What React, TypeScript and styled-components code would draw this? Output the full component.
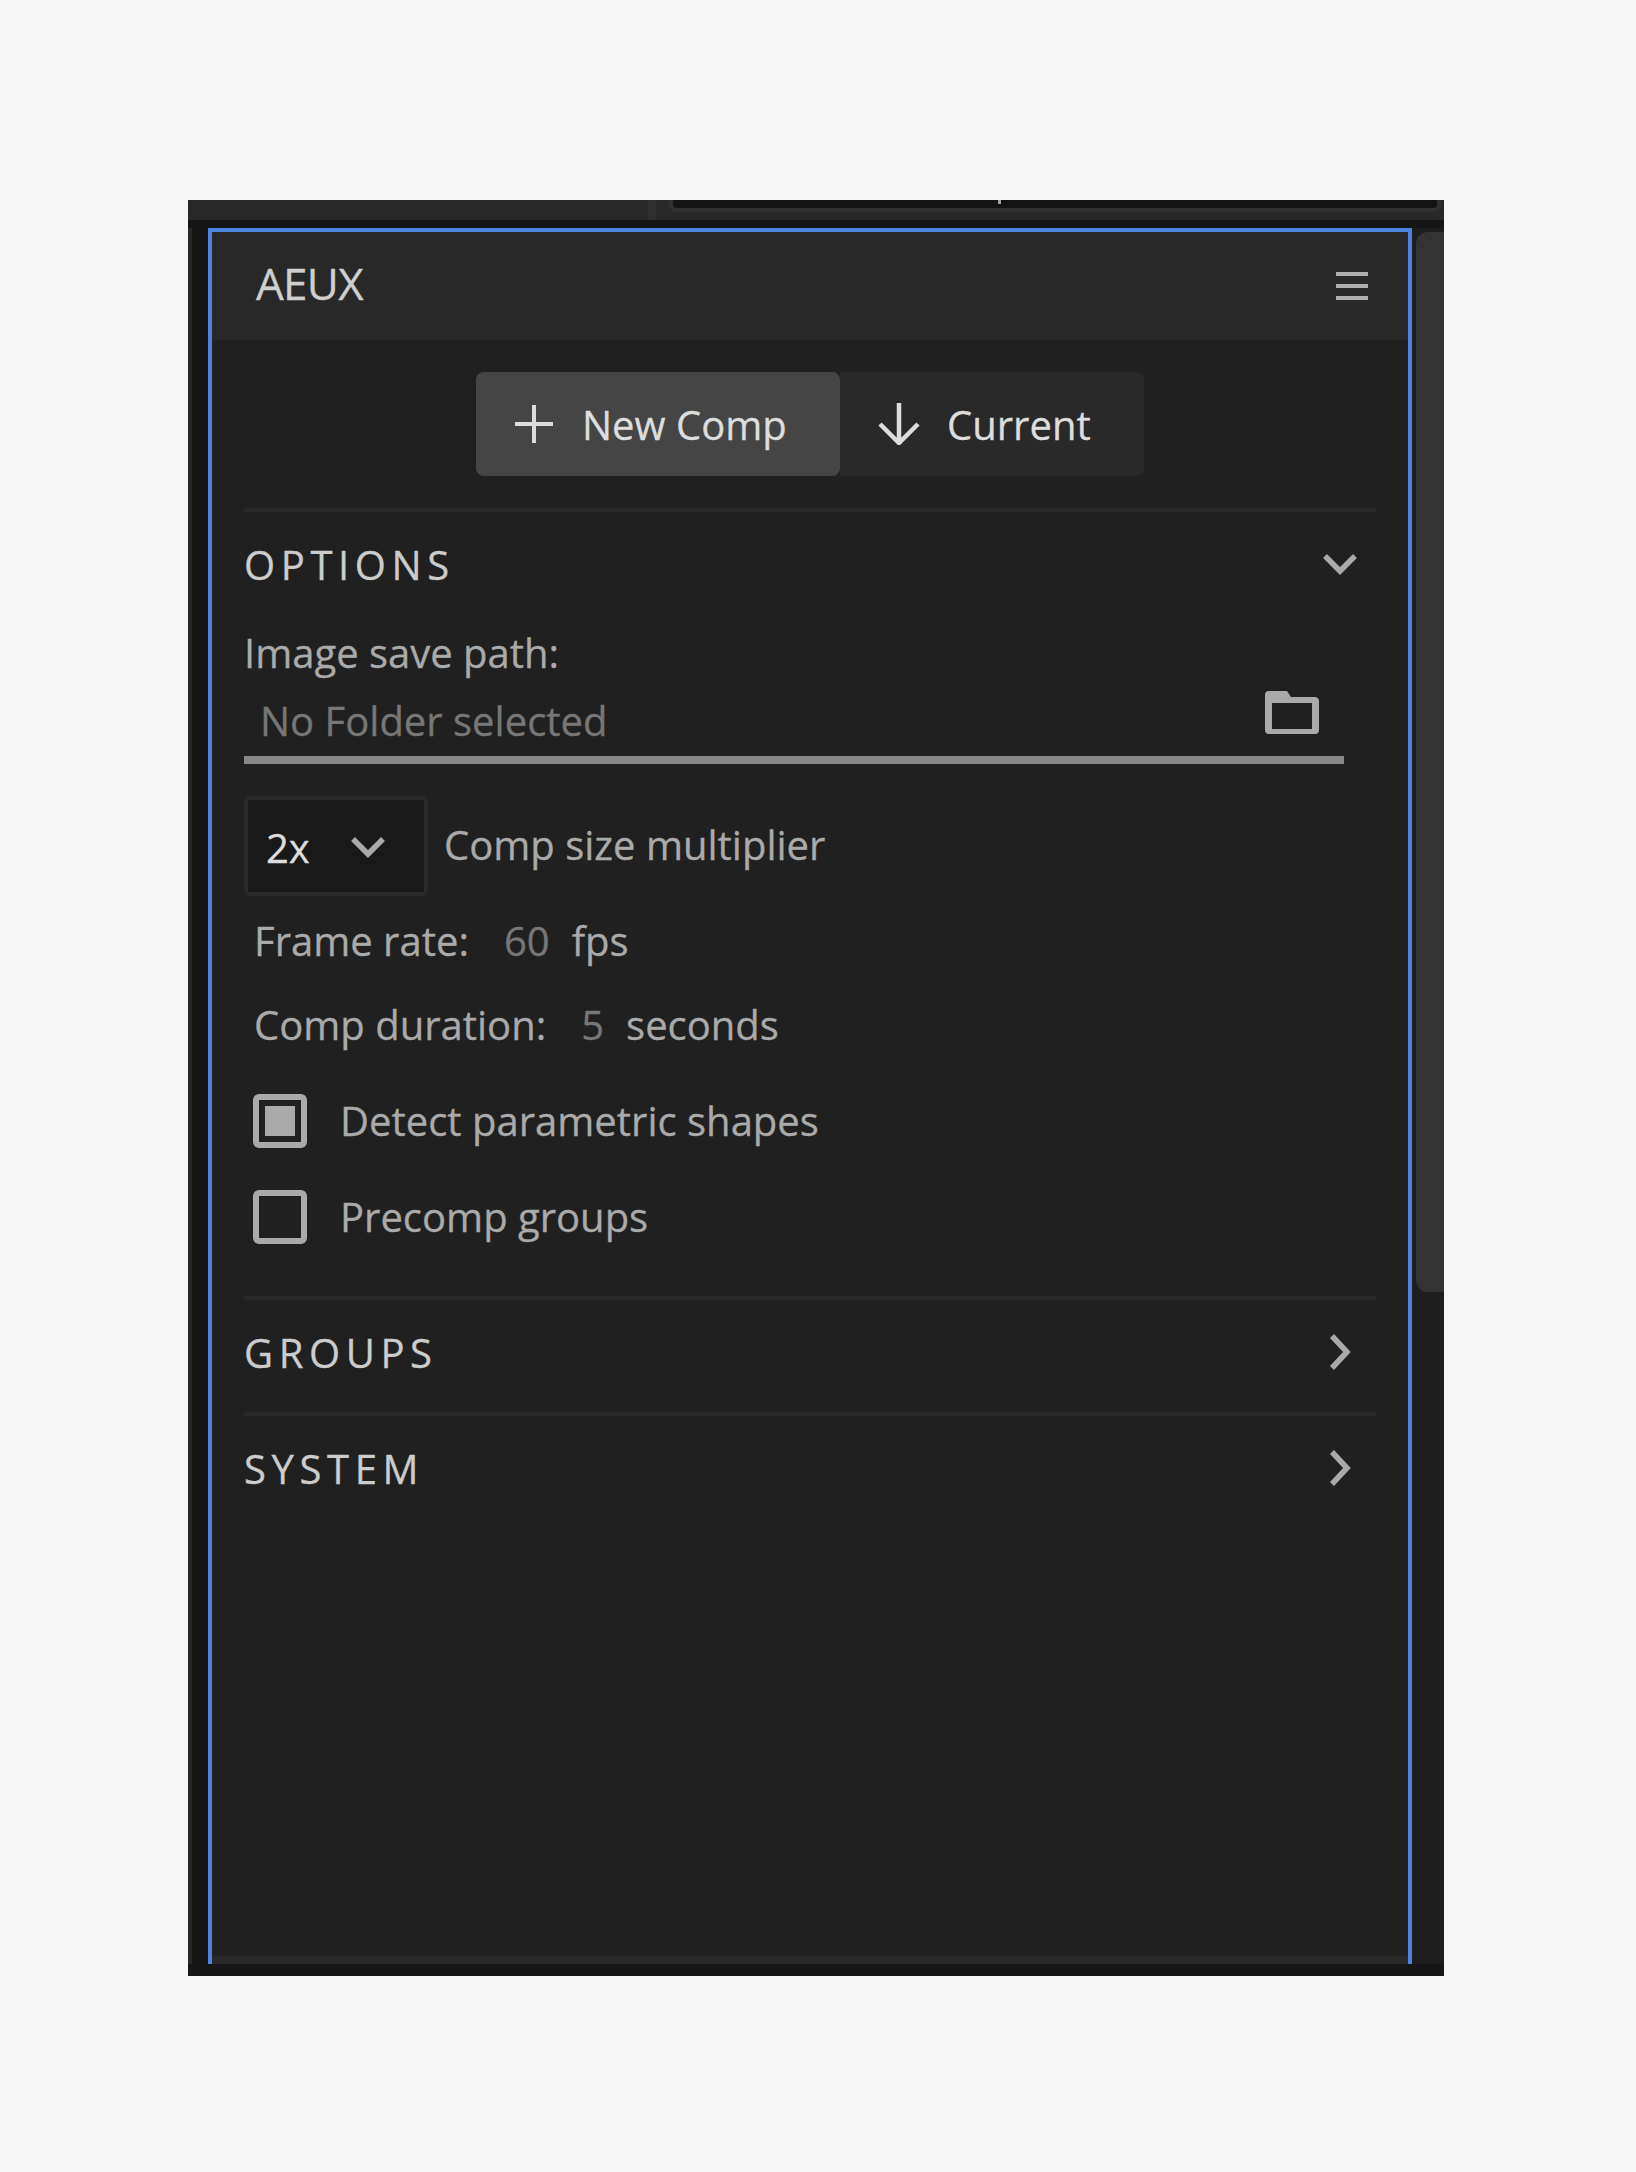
import React from "react";
import styled, { createGlobalStyle } from "styled-components";

const GlobalStyle = createGlobalStyle`
  html, body { margin: 0; padding: 0; background: #f6f6f6; }
  * { box-sizing: border-box; }
  body {
    font-family: "Open Sans", "Noto Sans", sans-serif;
    -webkit-text-stroke: 0.3px currentColor;
  }
`;

const Page = styled.div`
  width: 1636px;
  height: 2172px;
  padding: 200px 192px 196px 188px;
  background: #f6f6f6;
`;

const Frame = styled.div`
  width: 1256px;
  height: 1776px;
  background: #161616;
  display: flex;
  flex-direction: column;
`;

const TopStrip = styled.div`
  height: 20px;
  flex: none;
  background: #282828;
  display: flex;
  align-items: flex-start;
  padding-left: 460px;
  padding-right: 3px;
  margin-bottom: 8px;
`;

const StripDivider = styled.div`
  width: 8px;
  height: 20px;
  background: #2e2e2e;
  margin-right: 13px;
`;

const StripBox = styled.div`
  position: relative;
  flex: 1;
  height: 12px;
  background: #131313;
  border: 4px solid #303030;
  border-top: none;
  border-radius: 0 0 8px 8px;
`;

const Descender = styled.span`
  position: absolute;
  left: 325px;
  top: 0;
  width: 3px;
  height: 4px;
  background: #a0a0a0;
`;

const Body = styled.div`
  flex: 1;
  display: flex;
  min-height: 0;
  border-left: 4px solid #282828;
  padding-left: 16px;
`;

const Panel = styled.div`
  width: 1204px;
  flex: none;
  background: #202020;
  border: 4px solid #4a86e0;
  border-bottom: none;
  display: flex;
  flex-direction: column;
`;

const Header = styled.header`
  height: 108px;
  flex: none;
  background: #282828;
  display: flex;
  align-items: center;
  justify-content: space-between;
  padding: 0 40px 0 44px;
`;

const Title = styled.h1`
  margin: -6px 0 0;
  font-size: 44px;
  line-height: 60px;
  font-weight: 400;
  color: #cfcfcf;
  letter-spacing: -0.7px;
`;

const Main = styled.div`
  flex: 1;
  min-height: 0;
  padding: 32px 32px 0;
  display: flex;
  flex-direction: column;
`;

const ButtonRow = styled.div`
  display: flex;
  justify-content: center;
  margin-bottom: 32px;
`;

const ActionButton = styled.button<{ $primary?: boolean; $w: number; $pl: number }>`
  width: ${(p) => p.$w}px;
  height: 104px;
  border: none;
  padding: 0 0 0 ${(p) => p.$pl}px;
  display: flex;
  align-items: center;
  gap: ${(p) => (p.$primary ? 29 : 27)}px;
  background: ${(p) => (p.$primary ? "#454545" : "#292929")};
  border-radius: ${(p) => (p.$primary ? "8px" : "0 8px 8px 0")};
  color: #dddddd;
  font-family: inherit;
  font-size: 40px;
  line-height: 54px;
  font-weight: 400;
`;

const ButtonLabel = styled.span`
  display: block;
  padding-top: 2px;
`;

const Section = styled.section`
  border-top: 4px solid #292929;
  padding-bottom: 8px;
  flex: none;
`;

const SectionHead = styled.div<{ $pr: number }>`
  height: 104px;
  display: flex;
  align-items: center;
  justify-content: space-between;
  padding-right: ${(p) => p.$pr}px;
`;

const SectionTitle = styled.h2`
  margin: 2px 0 0;
  font-size: 40px;
  line-height: 54px;
  font-weight: 400;
  letter-spacing: 5.6px;
  color: #cccccc;
`;

const OptionsBody = styled.div`
  padding-top: 10px;
  padding-bottom: 44px;
`;

const FieldLabel = styled.div`
  font-size: 40px;
  line-height: 54px;
  color: #aaaaaa;
`;

const PathField = styled.div`
  width: 1100px;
  margin-top: 12px;
  height: 72px;
  padding: 2px 25px 0 16px;
  border-bottom: 8px solid #888888;
  display: flex;
  justify-content: space-between;
  align-items: flex-start;
`;

const PathText = styled.span`
  font-size: 40px;
  line-height: 54px;
  color: #777777;
`;

const FolderIcon = styled.svg`
  margin-top: -3px;
  width: 54px;
  height: 43px;
  flex: none;
`;

const MultiplierRow = styled.div`
  display: flex;
  align-items: center;
  gap: 16px;
  margin-top: 32px;
  margin-bottom: 18px;
`;

const Select = styled.div`
  width: 184px;
  height: 100px;
  background: #191919;
  border: 4px solid #292929;
  border-radius: 6px;
  display: flex;
  align-items: center;
  justify-content: space-between;
  padding: 0 38px 0 18px;
  font-size: 40px;
  line-height: 54px;
  color: #dddddd;
  & > svg {
    margin-top: 2px;
  }
`;

const SelectValue = styled.span`
  display: block;
  padding-top: 4px;
`;

const PlainLabel = styled.span`
  font-size: 40px;
  line-height: 54px;
  color: #aaaaaa;
`;

const MultiplierLabel = styled(PlainLabel)`
  margin-top: -2px;
`;

const SettingRow = styled.div`
  height: 54px;
  display: flex;
  align-items: center;
  padding-left: 10px;
  margin-bottom: 30px;
`;

const SettingValue = styled.span<{ $ml: number }>`
  margin-left: ${(p) => p.$ml}px;
  font-size: 40px;
  line-height: 54px;
  color: #777777;
`;

const SettingUnit = styled.span<{ $ml: number }>`
  margin-left: ${(p) => p.$ml}px;
  font-size: 40px;
  line-height: 54px;
  color: #aaaaaa;
`;

const CheckRow = styled.label`
  height: 54px;
  display: flex;
  align-items: center;
  gap: 33px;
  padding-left: 9px;
  margin-top: 42px;
  font-size: 40px;
  line-height: 54px;
  color: #aaaaaa;
`;

const CheckBox = styled.span<{ $checked?: boolean }>`
  width: 54px;
  height: 54px;
  flex: none;
  border: 6px solid #aaaaaa;
  border-radius: 6px;
  padding: 6px;
  display: block;
  &::after {
    content: "";
    display: ${(p) => (p.$checked ? "block" : "none")};
    width: 100%;
    height: 100%;
    background: #aaaaaa;
  }
`;

const Spacer = styled.div`
  flex: 1;
`;

const PanelFoot = styled.div`
  height: 8px;
  flex: none;
  background: #292929;
  margin: 0 -32px;
`;

const Gutter = styled.div`
  flex: 1;
  background: #1e1e1e;
  padding: 4px 0 0 4px;
`;

const Thumb = styled.div`
  height: 1060px;
  background: #333333;
  border-radius: 12px 0 0 12px;
`;

const BottomBar = styled.div`
  height: 12px;
  flex: none;
  background: #161616;
`;

const Glyph = styled.svg`
  display: block;
  flex: none;
  fill: none;
  stroke-linecap: butt;
  stroke-linejoin: miter;
`;

const Hamburger = () => (
  <Glyph width="32" height="28" viewBox="0 0 32 28">
    <rect x="0" y="0" width="32" height="4" fill="#b0b0b0" />
    <rect x="0" y="12" width="32" height="4" fill="#b0b0b0" />
    <rect x="0" y="24" width="32" height="4" fill="#b0b0b0" />
  </Glyph>
);

const Chevron = ({ dir, color = "#aaaaaa" }: { dir: "down" | "right"; color?: string }) =>
  dir === "down" ? (
    <Glyph width="36" height="24" viewBox="0 0 36 24" stroke={color} strokeWidth="5.5">
      <path d="M3 4 L18 19 L33 4" />
    </Glyph>
  ) : (
    <Glyph width="24" height="38" viewBox="0 0 24 38" stroke={color} strokeWidth="5.5">
      <path d="M4 3 L19 19 L4 35" />
    </Glyph>
  );

const Plus = () => (
  <Glyph width="38" height="38" viewBox="0 0 38 38" stroke="#dddddd" strokeWidth="4">
    <path d="M19 0 V38 M0 19 H38" />
  </Glyph>
);

const ArrowDown = () => (
  <Glyph width="42" height="42" viewBox="0 0 42 42" stroke="#dddddd" strokeWidth="4.5">
    <path d="M21 0 V40 M2 21 L21 40 L40 21" />
  </Glyph>
);

export default function App() {
  return (
    <Page>
      <GlobalStyle />
      <Frame>
        <TopStrip>
          <StripDivider />
          <StripBox>
            <Descender />
          </StripBox>
        </TopStrip>
        <Body>
          <Panel>
            <Header>
              <Title>AEUX</Title>
              <Hamburger />
            </Header>
            <Main>
              <ButtonRow>
                <ActionButton $primary $w={364} $pl={39}>
                  <Plus />
                  <ButtonLabel>New Comp</ButtonLabel>
                </ActionButton>
                <ActionButton $w={304} $pl={38}>
                  <ArrowDown />
                  <ButtonLabel>Current</ButtonLabel>
                </ActionButton>
              </ButtonRow>
              <Section>
                <SectionHead $pr={18}>
                  <SectionTitle>OPTIONS</SectionTitle>
                  <Chevron dir="down" />
                </SectionHead>
                <OptionsBody>
                  <FieldLabel>Image save path:</FieldLabel>
                  <PathField>
                    <PathText>No Folder selected</PathText>
                    <FolderIcon viewBox="0 0 54 43" fill="#aaaaaa" fillRule="evenodd">
                      <path d="M4 0 H22 L26 6 H49 Q54 6 54 10 V39 Q54 43 50 43 H4 Q0 43 0 39 V4 Q0 0 4 0 Z M7 12 V38 H47 V12 Z" />
                    </FolderIcon>
                  </PathField>
                  <MultiplierRow>
                    <Select>
                      <SelectValue>2x</SelectValue>
                      <Chevron dir="down" />
                    </Select>
                    <MultiplierLabel>Comp size multiplier</MultiplierLabel>
                  </MultiplierRow>
                  <SettingRow>
                    <PlainLabel>Frame rate:</PlainLabel>
                    <SettingValue $ml={35}>60</SettingValue>
                    <SettingUnit $ml={22}>fps</SettingUnit>
                  </SettingRow>
                  <SettingRow>
                    <PlainLabel>Comp duration:</PlainLabel>
                    <SettingValue $ml={35}>5</SettingValue>
                    <SettingUnit $ml={22}>seconds</SettingUnit>
                  </SettingRow>
                  <CheckRow>
                    <CheckBox $checked />
                    Detect parametric shapes
                  </CheckRow>
                  <CheckRow>
                    <CheckBox />
                    Precomp groups
                  </CheckRow>
                </OptionsBody>
              </Section>
              <Section>
                <SectionHead $pr={24}>
                  <SectionTitle>GROUPS</SectionTitle>
                  <Chevron dir="right" />
                </SectionHead>
              </Section>
              <Section>
                <SectionHead $pr={24}>
                  <SectionTitle>SYSTEM</SectionTitle>
                  <Chevron dir="right" />
                </SectionHead>
              </Section>
              <Spacer />
              <PanelFoot />
            </Main>
          </Panel>
          <Gutter>
            <Thumb />
          </Gutter>
        </Body>
        <BottomBar />
      </Frame>
    </Page>
  );
}
